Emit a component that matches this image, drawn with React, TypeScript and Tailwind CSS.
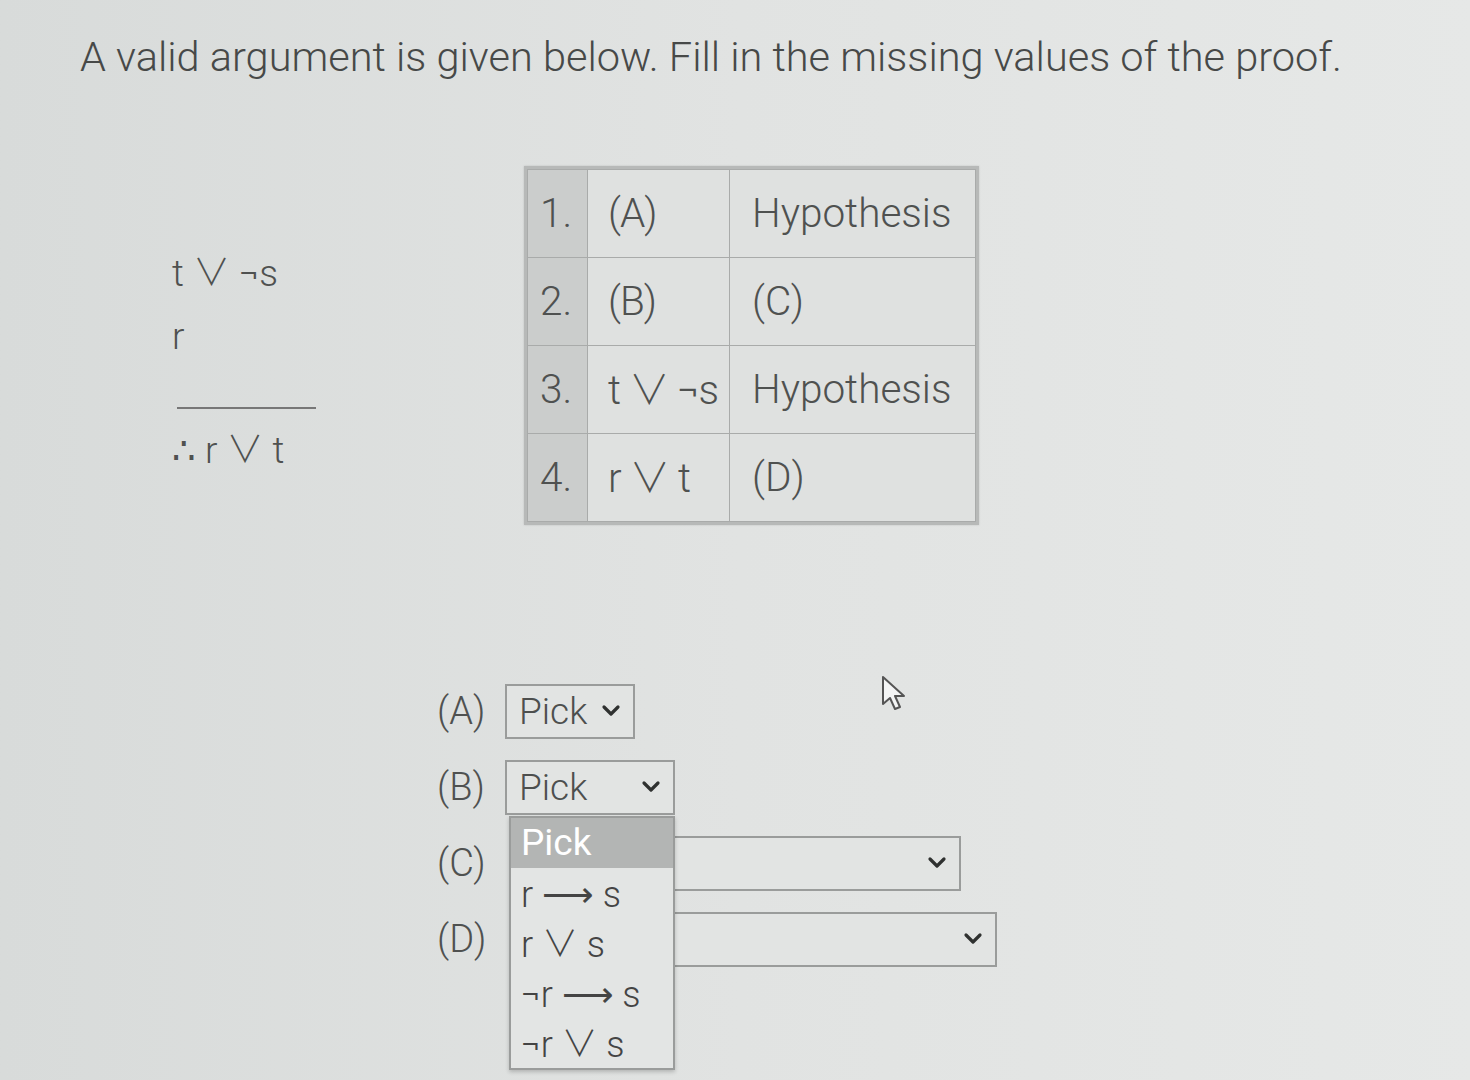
import React from "react"

// thin logic symbols (∨, ⟶) like the reference
function Sym({ children }: { children: React.ReactNode }) {
  return <span className="font-['Noto_Sans_CJK_JP',sans-serif] font-light">{children}</span>
}

function Chevron({ className = "" }: { className?: string }) {
  return (
    <svg width="20" height="14" viewBox="0 0 20 14" fill="none" className={className}>
      <path d="M3 3L10 10L17 3" stroke="#2f3130" strokeWidth="3.2" strokeLinecap="round" strokeLinejoin="round" />
    </svg>
  )
}

function Select({ width, chevronGap, children }: { width: string; chevronGap?: string; children?: React.ReactNode }) {
  return (
    <div className={`flex items-center justify-between h-[55px] border-2 border-[#9a9c9b] bg-[#e2e4e3] pl-3 pr-3 ${width}`}>
      <span className="text-[37px] font-light text-[#4d4f4e] leading-none">{children}</span>
      <Chevron className={chevronGap} />
    </div>
  )
}

const rows: { n: string; stmt: React.ReactNode; reason: string }[] = [
  { n: "1.", stmt: "(A)", reason: "Hypothesis" },
  { n: "2.", stmt: "(B)", reason: "(C)" },
  { n: "3.", stmt: <>t <Sym>∨</Sym> ¬s</>, reason: "Hypothesis" },
  { n: "4.", stmt: <>r <Sym>∨</Sym> t</>, reason: "(D)" },
]

const options: React.ReactNode[] = [
  <>r <Sym>⟶</Sym> s</>,
  <>r <Sym>∨</Sym> s</>,
  <>¬r <Sym>⟶</Sym> s</>,
  <>¬r <Sym>∨</Sym> s</>,
]

export default function App() {
  return (
    <div className="relative w-[1470px] h-[1080px] overflow-hidden bg-gradient-to-r from-[#d8dbda] via-[#e1e3e2] to-[#e6e8e7] text-[#4f5150] font-['Roboto','Liberation_Sans',Arial,sans-serif]">
      {/* Title */}
      <h1 className="pl-[80px] pt-[36px] text-[41.5px] font-light text-[#474948] leading-none">
        A valid argument is given below. Fill in the missing values of the proof.
      </h1>

      <div className="flex mt-[88px]">
        {/* Argument */}
        <div className="pl-[172px] pt-[86px] w-[524px] text-[37px] font-light leading-none">
          <p>t <Sym>∨</Sym> ¬s</p>
          <p className="mt-[26px]">r</p>
          <div className="mt-[52px] ml-[5px] w-[139px] h-[2px] bg-[#777]" />
          <p className="mt-[20px]">∴ r <Sym>∨</Sym> t</p>
        </div>

        {/* Proof table */}
        <div className="border-[3px] border-[#b7b9b8] shadow-[0_0_2px_rgba(0,0,0,0.15)]">
          <table className="border-collapse text-[40.5px] font-light leading-none">
            <tbody>
              {rows.map((r) => (
                <tr key={r.n} className="h-[88px]">
                  <td className="w-[60px] pl-[12px] bg-[#cbcdcc] border border-[#a9abaa]">{r.n}</td>
                  <td className="w-[142px] pl-[20px] bg-[#dfe1e0] border border-[#a9abaa] whitespace-nowrap tracking-[-1px]">{r.stmt}</td>
                  <td className="w-[246px] pl-[22px] bg-[#dfe1e0] border border-[#a9abaa]">{r.reason}</td>
                </tr>
              ))}
            </tbody>
          </table>
        </div>
      </div>

      {/* Answers */}
      <div className="pl-[437px] mt-[158px] flex flex-col gap-[19px] text-[38px] font-light">
        <div className="flex items-center gap-[18px]">
          <span className="w-[50px]">(A)</span>
          <Select width="w-[130px]" chevronGap="ml-1">Pick</Select>
        </div>
        <div className="flex items-center gap-[18px]">
          <span className="w-[50px]">(B)</span>
          <div className="relative">
            <Select width="w-[170px]">Pick</Select>
            {/* Open listbox */}
            <div className="absolute left-[4px] top-[56px] w-[166px] z-10 border-2 border-[#9a9c9b] bg-[#e3e5e4] shadow-[0_2px_4px_rgba(0,0,0,0.2)]">
              <div className="h-[50px] bg-[#b3b5b4] text-white font-normal pl-[10px] flex items-center text-[37px]">Pick</div>
              {options.map((o, i) => (
                <div key={i} className="h-[50px] pl-[10px] flex items-center text-[36px] text-[#444]">
                  <span className="whitespace-nowrap">{o}</span>
                </div>
              ))}
            </div>
          </div>
        </div>
        <div className="flex items-center gap-[18px]">
          <span className="w-[50px]">(C)</span>
          <div className="ml-[4px]">
            <Select width="w-[452px]" />
          </div>
        </div>
        <div className="flex items-center gap-[18px]">
          <span className="w-[50px]">(D)</span>
          <div className="ml-[4px]">
            <Select width="w-[488px]" />
          </div>
        </div>
      </div>

      {/* Mouse cursor */}
      <svg width="30" height="40" viewBox="0 0 30 40" className="absolute left-[880px] top-[674px]">
        <path d="M3 3L3 30L10 24L15 35L20 33L15 22L24 22Z" fill="#f4f5f5" stroke="#555" strokeWidth="2" strokeLinejoin="round" />
      </svg>
    </div>
  )
}
